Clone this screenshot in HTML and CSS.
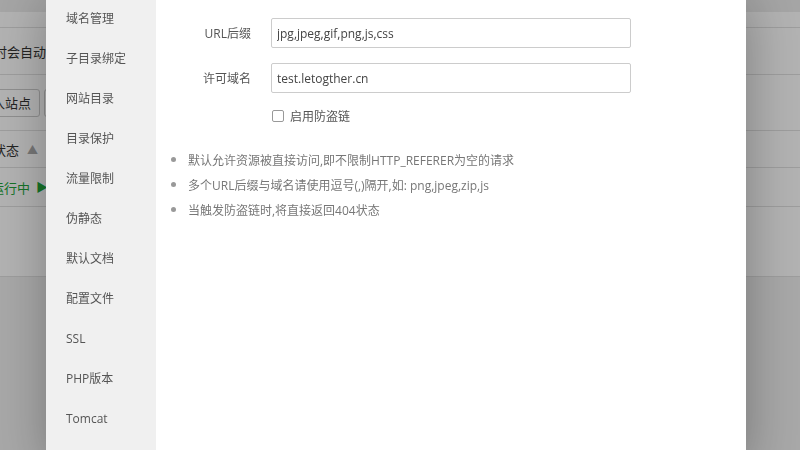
FILE: index.html
```html
<!DOCTYPE html>
<html lang="zh-CN">
<head>
<meta charset="utf-8">
<title>防盗链</title>
<link rel="stylesheet" href="styles.css">
</head>
<body>
<div class="page">
  <div class="topbar"></div>
  <div class="panel">
    <div class="row r1"></div>
    <div class="row r2"><span class="tip">站点时会自动创建对应目录</span></div>
    <div class="row r3"><span class="btn">导入站点</span><span class="btn">修改默认页</span></div>
    <div class="row r4"><span class="th">网站状态</span><span class="sort">▲</span></div>
    <div class="row r5"><span class="run">已运行中</span><span class="play">▶</span></div>
    <div class="row r6"></div>
  </div>
</div>
<div class="shade"></div>
<div class="layer">
  <ul class="side">
    <li>域名管理</li>
    <li>子目录绑定</li>
    <li>网站目录</li>
    <li>目录保护</li>
    <li>流量限制</li>
    <li>伪静态</li>
    <li>默认文档</li>
    <li>配置文件</li>
    <li>SSL</li>
    <li>PHP版本</li>
    <li>Tomcat</li>
  </ul>
  <div class="content">
    <div class="line">
      <span class="tname">URL后缀</span>
      <input class="inp" type="text" value="jpg,jpeg,gif,png,js,css">
    </div>
    <div class="line">
      <span class="tname">许可域名</span>
      <input class="inp" type="text" value="test.letogther.cn">
    </div>
    <div class="line check-line">
      <span class="tname"></span>
      <label class="chk"><span class="box"></span>启用防盗链</label>
    </div>
    <ul class="help">
      <li><span class="dot"></span>默认允许资源被直接访问,即不限制HTTP_REFERER为空的请求</li>
      <li><span class="dot"></span>多个URL后缀与域名请使用逗号(,)隔开,如: png,jpeg,zip,js</li>
      <li><span class="dot"></span>当触发防盗链时,将直接返回404状态</li>
    </ul>
  </div>
</div>
</body>
</html>
```
FILE: styles.css
```css
html, body {
  margin: 0;
  padding: 0;
  height: 100%;
  overflow: hidden;
}
body {
  background: #f1f1f1;
  font-family: "Open Sans", "Noto Sans CJK SC", sans-serif;
  font-size: 12px;
  color: #555;
}
.page {
  width: 800px;
}
.topbar {
  height: 12px;
  background: #ececec;
}
.panel {
  background: #fff;
}
.row {
  border-bottom: 1px solid #e1e1e1;
  display: flex;
  align-items: center;
  white-space: nowrap;
  overflow: hidden;
}
.r1 { height: 15px; }
.r2 { height: 46px; font-size: 13px; color: #333; }
.r2 .tip { margin-left: -32px; }
.r3 { height: 55px; gap: 4px; }
.r3 .btn {
  display: inline-flex;
  align-items: center;
  height: 26px;
  padding: 0 8px;
  border: 1px solid #ccc;
  border-radius: 3px;
  font-size: 13px;
  color: #333;
  background: #fff;
}
.r3 .btn:first-child { margin-left: -30px; }
.r4 { height: 36px; font-size: 13px; color: #333; }
.r4 .th { margin-left: -33px; }
.r4 .sort { margin-left: 8px; color: #aaa; font-size: 11px; }
.r5 { height: 38px; font-size: 13px; color: #20a53a; }
.r5 .run { margin-left: -22px; }
.r5 .play { margin-left: 6px; font-size: 12px; }
.r6 { height: 69px; }

.shade {
  position: fixed;
  inset: 0;
  background: rgba(0, 0, 0, 0.3);
}
.layer {
  position: fixed;
  left: 46px;
  top: -1px;
  width: 700px;
  height: 470px;
  background: #fff;
  display: flex;
  box-shadow: 1px 1px 50px rgba(0, 0, 0, 0.3);
}
.side {
  list-style: none;
  margin: 0;
  padding: 0;
  width: 110px;
  background: #f0f0f0;
  flex-shrink: 0;
}
.side li {
  height: 40px;
  line-height: 40px;
  padding-left: 20px;
  font-size: 12px;
  color: #555;
}
.content {
  flex: 1;
  padding: 19px 15px 0;
}
.line {
  display: flex;
  align-items: center;
  margin-bottom: 15px;
}
.tname {
  width: 80px;
  margin-right: 20px;
  text-align: right;
  color: #555;
  font-size: 12px;
  flex-shrink: 0;
}
.inp {
  box-sizing: border-box;
  width: 360px;
  height: 30px;
  border: 1px solid #ccc;
  border-radius: 2px;
  padding: 0 5px;
  font-family: "Open Sans", "Noto Sans CJK SC", sans-serif;
  font-size: 12px;
  color: #444;
  outline: none;
}
.check-line {
  height: 30px;
  margin-top: -7px;
  margin-bottom: 0;
}
.chk {
  display: flex;
  align-items: center;
  gap: 6px;
  color: #555;
  font-size: 12px;
}
.box {
  box-sizing: border-box;
  width: 12px;
  height: 12px;
  border: 1px solid #999;
  border-radius: 2px;
  background: #fff;
  margin-left: 1px;
}
.help {
  list-style: none;
  margin: 16px 0 0;
  padding: 0;
}
.help li {
  display: flex;
  align-items: center;
  height: 25px;
  color: #777;
  font-size: 12px;
  white-space: nowrap;
}
.help .dot {
  width: 5px;
  height: 5px;
  border-radius: 50%;
  background: #999;
  margin-left: 0;
  margin-right: 12px;
  flex-shrink: 0;
}
```
